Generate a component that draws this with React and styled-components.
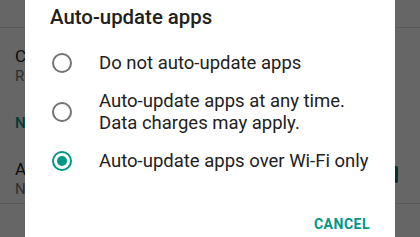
import React, { useState } from "react";
import styled, { createGlobalStyle } from "styled-components";

const GlobalStyle = createGlobalStyle`
  html, body {
    margin: 0;
    padding: 0;
    background: #fff;
  }
  body {
    font-family: Roboto, "Noto Sans", sans-serif;
  }
`;

const options = [
  { id: "never", label: ["Do not auto-update apps"] },
  { id: "any", label: ["Auto-update apps at any time.", "Data charges may apply."] },
  { id: "wifi", label: ["Auto-update apps over Wi-Fi only"] },
];

const App = () => {
  const [selected, setSelected] = useState("wifi");

  return (
    <Screen>
      <GlobalStyle />
      <Settings>
        <Divider />
        <SettingRow $top={18}>
          <SettingTitle>Clear local search history</SettingTitle>
          <SettingSub>Remove all the searches you have performed</SettingSub>
        </SettingRow>
        <SectionHeader>Notifications</SectionHeader>
        <SettingRow $top={16}>
          <SettingTitle>Apps updates available</SettingTitle>
          <SettingSub>Notify when updates are available</SettingSub>
          <Toggle />
        </SettingRow>
        <Divider />
      </Settings>
      <Scrim />
      <Dialog>
        <Title>Auto-update apps</Title>
        <OptionList>
          {options.map((o) => (
            <Option key={o.id} onClick={() => setSelected(o.id)}>
              <Radio $checked={selected === o.id} />
              <OptionText>
                {o.label.map((line) => (
                  <div key={line}>{line}</div>
                ))}
              </OptionText>
            </Option>
          ))}
        </OptionList>
        <Actions>
          <TextButton>Cancel</TextButton>
        </Actions>
      </Dialog>
    </Screen>
  );
};

export default App;

const Screen = styled.div`
  position: relative;
  width: 420px;
  height: 237px;
  overflow: hidden;
  background: #fff;
`;

const Settings = styled.div`
  display: flex;
  flex-direction: column;
  padding-top: 27px;
`;

const Divider = styled.div`
  height: 1px;
  background: #dcdcdc;
`;

const SettingRow = styled.div`
  position: relative;
  display: flex;
  flex-direction: column;
  padding: ${(p) => p.$top}px 15px 0;
  height: ${(p) => (p.$top === 18 ? 70 : 60)}px;
  box-sizing: border-box;
`;

const SettingTitle = styled.div`
  font-size: 17px;
  line-height: 20px;
  color: #212121;
`;

const SettingSub = styled.div`
  font-size: 15px;
  line-height: 20px;
  color: #757575;
`;

const SectionHeader = styled.div`
  padding: 16px 15px 0;
  height: 45px;
  box-sizing: border-box;
  font-size: 15px;
  font-weight: 500;
  color: #009688;
`;

const Toggle = styled.div`
  position: absolute;
  right: 22px;
  top: 23px;
  width: 12px;
  height: 17px;
  border-radius: 2px;
  background: #0b7d72;
`;

const Scrim = styled.div`
  position: absolute;
  inset: 0;
  background: rgba(0, 0, 0, 0.6);
`;

const Dialog = styled.div`
  position: absolute;
  left: 25px;
  top: 0;
  width: 370px;
  bottom: -10px;
  box-sizing: border-box;
  padding: 5px 25px 0;
  background: #fff;
  display: flex;
  flex-direction: column;
`;

const Title = styled.div`
  font-size: 20.4px;
  line-height: 24px;
  font-weight: 500;
  color: #212121;
`;

const OptionList = styled.div`
  display: flex;
  flex-direction: column;
  gap: 1px;
  margin-top: 11px;
`;

const Option = styled.div`
  display: flex;
  align-items: center;
  gap: 27px;
  min-height: 46px;
  padding: 3px 0 3px 2px;
  box-sizing: border-box;
  cursor: pointer;
`;

const Radio = styled.span`
  position: relative;
  flex: none;
  width: 20px;
  height: 20px;
  box-sizing: border-box;
  border-radius: 50%;
  border: 2px solid ${(p) => (p.$checked ? "#009688" : "#737373")};

  &::after {
    content: "";
    display: ${(p) => (p.$checked ? "block" : "none")};
    position: absolute;
    left: 3px;
    top: 3px;
    width: 10px;
    height: 10px;
    border-radius: 50%;
    background: #009688;
  }
`;

const OptionText = styled.div`
  font-size: 18.5px;
  line-height: 22px;
  color: #212121;
`;

const Actions = styled.div`
  display: flex;
  justify-content: flex-end;
  margin-top: 22px;
`;

const TextButton = styled.button`
  height: 36px;
  padding: 0;
  border: none;
  background: none;
  font-family: Roboto, "Noto Sans", sans-serif;
  font-size: 14px;
  font-weight: 700;
  text-transform: uppercase;
  letter-spacing: 0.5px;
  color: #009688;
  cursor: pointer;
`;
